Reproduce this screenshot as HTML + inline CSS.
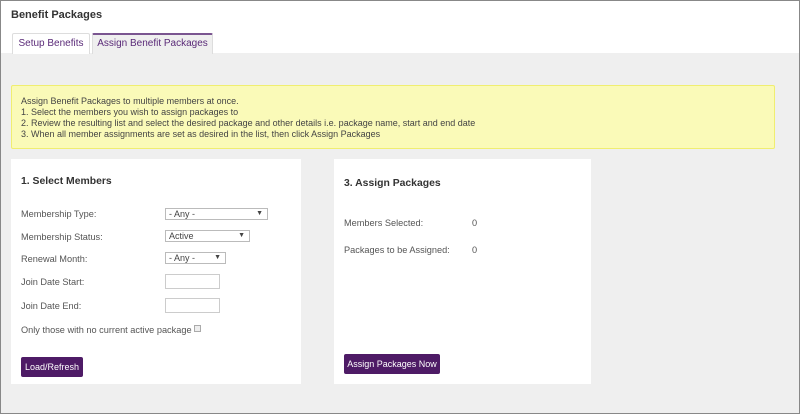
<!DOCTYPE html>
<html><head><style>
*{box-sizing:border-box;margin:0;padding:0}
body{width:800px;height:414px;position:relative;overflow:hidden;font-family:"Liberation Sans",sans-serif;background:#fff}
.frame{position:absolute;left:0;top:0;width:800px;height:414px;border:1px solid #888;z-index:10;pointer-events:none}
.gray{position:absolute;left:0;top:53px;width:800px;height:361px;background:#efefef}
.a{position:absolute}
h1{position:absolute;left:11px;top:9px;font-size:11px;font-weight:bold;color:#333}
.tab{position:absolute;top:33px;height:21px;border:1px solid #ddd;border-bottom:none;font-size:10px;color:#5a2a78;text-align:center;line-height:20px;border-radius:2px 2px 0 0}
.yel{position:absolute;left:11px;top:85px;width:764px;height:64px;background:#fafab8;border:1px solid #f0ee70;border-radius:2px;font-size:9px;color:#444;padding:10px 9px;line-height:11px}
.panel{position:absolute;background:#fff;top:159px;height:225px}
.lbl{position:absolute;font-size:9.2px;color:#555}
.sel{position:absolute;height:12px;border:1px solid #bbb;background:#fff;font-size:9px;color:#444;padding-left:3px;line-height:10px}
.sel b{position:absolute;right:4px;top:0;font-size:7px}
.inp{position:absolute;width:55px;height:15px;border:1px solid #ccc;background:#fff}
.btn{position:absolute;background:#4e1b66;color:#fff;font-size:9px;border-radius:2px;text-align:center;line-height:20px;height:20px}
h2{position:absolute;font-size:10.4px;font-weight:bold;color:#333}
</style></head><body>
<div class="gray"></div>
<h1>Benefit Packages</h1>
<div class="tab" style="left:12px;width:78px;background:#fff">Setup Benefits</div>
<div class="tab" style="left:92px;width:121px;background:#efefef;border-top:2px solid #7a5590;line-height:18px">Assign Benefit Packages</div>
<div class="yel">Assign Benefit Packages to multiple members at once.<br>1. Select the members you wish to assign packages to<br>2. Review the resulting list and select the desired package and other details i.e. package name, start and end date<br>3. When all member assignments are set as desired in the list, then click Assign Packages</div>
<div class="panel" style="left:11px;width:290px"></div>
<h2 style="left:21px;top:176px">1. Select Members</h2>
<div class="lbl" style="left:21px;top:209px">Membership Type:</div>
<div class="sel" style="left:165px;top:208px;width:103px">- Any -<b>▼</b></div>
<div class="lbl" style="left:21px;top:232px">Membership Status:</div>
<div class="sel" style="left:165px;top:230px;width:85px">Active<b>▼</b></div>
<div class="lbl" style="left:21px;top:254px">Renewal Month:</div>
<div class="sel" style="left:165px;top:252px;width:61px">- Any -<b>▼</b></div>
<div class="lbl" style="left:21px;top:277px">Join Date Start:</div>
<div class="inp" style="left:165px;top:274px"></div>
<div class="lbl" style="left:21px;top:301px">Join Date End:</div>
<div class="inp" style="left:165px;top:298px"></div>
<div class="lbl" style="left:21px;top:325px">Only those with no current active package</div>
<div class="a" style="left:194px;top:325px;width:7px;height:7px;border:1px solid #aaa;background:#eee"></div>
<div class="btn" style="left:21px;top:357px;width:62px">Load/Refresh</div>
<div class="panel" style="left:334px;width:257px"></div>
<h2 style="left:344px;top:178px">3. Assign Packages</h2>
<div class="lbl" style="left:344px;top:218px">Members Selected:</div>
<div class="lbl" style="left:472px;top:218px">0</div>
<div class="lbl" style="left:344px;top:245px">Packages to be Assigned:</div>
<div class="lbl" style="left:472px;top:245px">0</div>
<div class="btn" style="left:344px;top:354px;width:96px">Assign Packages Now</div>
<div class="frame"></div>
</body></html>
